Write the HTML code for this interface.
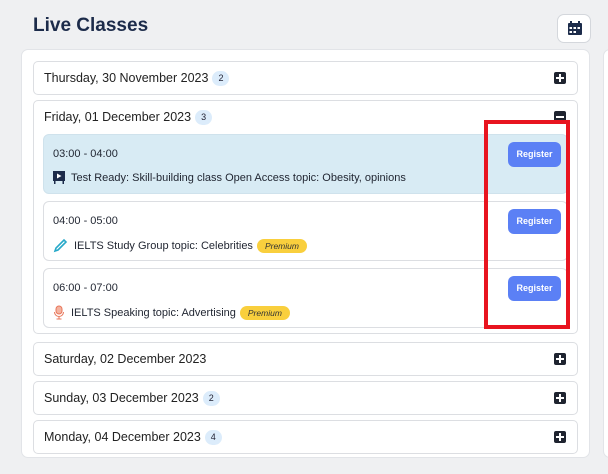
<!DOCTYPE html>
<html><head><style>
*{box-sizing:border-box;margin:0;padding:0}
body{width:608px;height:474px;background:#eff0f2;font-family:"Liberation Sans",sans-serif;color:#1f2430;position:relative;overflow:hidden}
.title{position:absolute;left:33px;top:15px;font-size:19px;font-weight:bold;color:#1c2b4a}
.calbtn{position:absolute;left:557px;top:14px;width:34px;height:29px;background:#fff;border:1px solid #d4d7dc;border-radius:7px}
.outer{position:absolute;left:21px;top:49px;width:569px;height:409px;background:#fff;border:1px solid #e2e4e8;border-radius:7px}
.rcard{position:absolute;left:603px;top:49px;width:20px;height:409px;background:#fff;border:1px solid #e2e4e8;border-radius:7px}
.acc{position:absolute;left:33px;width:545px;background:#fff;border:1px solid #dcdee2;border-radius:5px}
.hd{position:absolute;left:10px;top:9px;font-size:12.5px;color:#222}
.badge{display:inline-block;margin-left:4px;width:17px;height:15px;border-radius:8px;background:#dcecfb;font-size:9px;text-align:center;line-height:15px;vertical-align:1px;color:#223}
.pm{position:absolute;right:11px;top:10px;width:12px;height:12px;background:#1f2430;border-radius:2px}
.pm:before{content:"";position:absolute;left:2px;top:5px;width:8px;height:2px;background:#fff}
.pm.p:after{content:"";position:absolute;left:5px;top:2px;width:2px;height:8px;background:#fff}
.card{position:absolute;left:9px;width:525px;height:60px;border:1px solid #dcdee2;border-radius:6px;background:#fff}
.card.b{background:#d8ebf4;border-color:#cfe2ec}
.tm{position:absolute;left:9px;top:13px;font-size:11px}
.ds{position:absolute;left:9px;top:36px;font-size:11px;white-space:nowrap;display:flex;align-items:center}
.ds svg{margin-right:6px}
.reg{position:absolute;left:464px;top:7px;width:53px;height:25px;background:#5b80f5;border-radius:6px;color:#fff;font-size:9px;font-weight:bold;text-align:center;line-height:25px}
.prem{display:inline-block;margin-left:4px;background:#f9cf3d;border-radius:8px;font-size:8.5px;font-style:italic;padding:2px 8px;color:#333}
.red{position:absolute;left:484px;top:120px;width:86px;height:209px;border:4px solid #e8141f}
</style></head><body>
<div class="title">Live Classes</div>
<div class="calbtn"><svg width="34" height="29" viewBox="0 0 34 29"><rect x="10" y="8" width="14" height="12" rx="1" fill="#1c2b4a"/><rect x="12" y="6" width="2" height="3" fill="#1c2b4a"/><rect x="20" y="6" width="2" height="3" fill="#1c2b4a"/><g fill="#fff"><rect x="11.5" y="12" width="2.5" height="2"/><rect x="15.5" y="12" width="2.5" height="2"/><rect x="19.5" y="12" width="2.5" height="2"/><rect x="11.5" y="16" width="2.5" height="2"/><rect x="15.5" y="16" width="2.5" height="2"/></g></svg></div>
<div class="outer"></div>
<div class="rcard"></div>
<div class="acc" style="top:61px;height:34px"><div class="hd">Thursday, 30 November 2023<span class="badge">2</span></div><div class="pm p"></div></div>
<div class="acc" style="top:100px;height:234px"><div class="hd">Friday, 01 December 2023<span class="badge">3</span></div><div class="pm"></div>
<div class="card b" style="top:33px"><div class="tm">03:00 - 04:00</div><div class="ds"><svg width="12" height="13" viewBox="0 0 12 13"><rect x="0" y="0" width="12" height="10" fill="#1c2b4a"/><path d="M4 2.5L8.5 5 4 7.5Z" fill="#fff"/><rect x="1" y="10" width="1.5" height="3" fill="#1c2b4a"/><rect x="9.5" y="10" width="1.5" height="3" fill="#1c2b4a"/></svg>Test Ready: Skill-building class Open Access topic: Obesity, opinions</div><div class="reg">Register</div></div>
<div class="card" style="top:100px"><div class="tm">04:00 - 05:00</div><div class="ds"><svg width="15" height="15" viewBox="0 0 15 15"><path d="M2 13L3 10 11 2 13 4 5 12Z" fill="none" stroke="#27a9c9" stroke-width="1.6"/></svg>IELTS Study Group topic: Celebrities<span class="prem">Premium</span></div><div class="reg">Register</div></div>
<div class="card" style="top:167px"><div class="tm">06:00 - 07:00</div><div class="ds"><svg width="12" height="15" viewBox="0 0 12 15"><rect x="3" y="1" width="6" height="8" rx="3" fill="#f4b3a0" stroke="#e8765a"/><path d="M1.5 7a4.5 4.5 0 0 0 9 0M6 11.5v2.5M3.5 14h5" fill="none" stroke="#e8765a"/></svg>IELTS Speaking topic: Advertising<span class="prem">Premium</span></div><div class="reg">Register</div></div>
</div>
<div class="acc" style="top:342px;height:34px"><div class="hd">Saturday, 02 December 2023</div><div class="pm p"></div></div>
<div class="acc" style="top:381px;height:34px"><div class="hd">Sunday, 03 December 2023<span class="badge">2</span></div><div class="pm p"></div></div>
<div class="acc" style="top:420px;height:34px"><div class="hd">Monday, 04 December 2023<span class="badge">4</span></div><div class="pm p"></div></div>
<div class="red"></div>
</body></html>
